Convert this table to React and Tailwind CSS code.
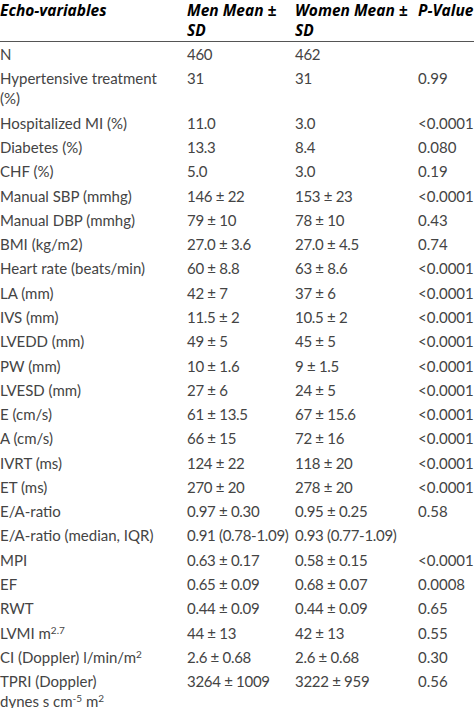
import React from "react";

const Sup = ({ children }) => <sup className="text-[10px]">{children}</sup>;

const rows = [
  ["N", "460", "462", ""],
  ["Hypertensive treatment (%)", "31", "31", "0.99"],
  ["Hospitalized MI (%)", "11.0", "3.0", "<0.0001"],
  ["Diabetes (%)", "13.3", "8.4", "0.080"],
  ["CHF (%)", "5.0", "3.0", "0.19"],
  ["Manual SBP (mmhg)", "146 ± 22", "153 ± 23", "<0.0001"],
  ["Manual DBP (mmhg)", "79 ± 10", "78 ± 10", "0.43"],
  ["BMI (kg/m2)", "27.0 ± 3.6", "27.0 ± 4.5", "0.74"],
  ["Heart rate (beats/min)", "60 ± 8.8", "63 ± 8.6", "<0.0001"],
  ["LA (mm)", "42 ± 7", "37 ± 6", "<0.0001"],
  ["IVS (mm)", "11.5 ± 2", "10.5 ± 2", "<0.0001"],
  ["LVEDD (mm)", "49 ± 5", "45 ± 5", "<0.0001"],
  ["PW (mm)", "10 ± 1.6", "9 ± 1.5", "<0.0001"],
  ["LVESD (mm)", "27 ± 6", "24 ± 5", "<0.0001"],
  ["E (cm/s)", "61 ± 13.5", "67 ± 15.6", "<0.0001"],
  ["A (cm/s)", "66 ± 15", "72 ± 16", "<0.0001"],
  ["IVRT (ms)", "124 ± 22", "118 ± 20", "<0.0001"],
  ["ET (ms)", "270 ± 20", "278 ± 20", "<0.0001"],
  ["E/A-ratio", "0.97 ± 0.30", "0.95 ± 0.25", "0.58"],
  ["E/A-ratio (median, IQR)", "0.91 (0.78-1.09)", "0.93 (0.77-1.09)", ""],
  ["MPI", "0.63 ± 0.17", "0.58 ± 0.15", "<0.0001"],
  ["EF", "0.65 ± 0.09", "0.68 ± 0.07", "0.0008"],
  ["RWT", "0.44 ± 0.09", "0.44 ± 0.09", "0.65"],
  [<>LVMI m<Sup>2.7</Sup></>, "44 ± 13", "42 ± 13", "0.55"],
  [<>CI (Doppler) l/min/m<Sup>2</Sup></>, "2.6 ± 0.68", "2.6 ± 0.68", "0.30"],
  [
    <>
      TPRI (Doppler)
      <br />
      dynes s cm<Sup>-5</Sup> m<Sup>2</Sup>
    </>,
    "3264 ± 1009",
    "3222 ± 959",
    "0.56",
  ],
];

const cols = "grid grid-cols-[187px_108px_123px_1fr]";

export default function App() {
  return (
    <div className="w-[474px] h-[708px] overflow-hidden bg-white font-['Lato','Open_Sans',sans-serif] text-[15px]">
      <div className={`${cols} border-b-[1.5px] border-[#555] pb-[1px] leading-[20px] font-['Open_Sans',sans-serif] text-[15.5px] font-bold italic text-black`}>
        <div className="pr-2">Echo-variables</div>
        <div className="pr-2">Men Mean ± SD</div>
        <div className="pr-2">Women Mean ± SD</div>
        <div className="whitespace-nowrap">P-Value</div>
      </div>
      {rows.map((r, i) => (
        <div key={i} className={`${cols} py-[2.15px] leading-[20px] font-normal text-[#444]`}>
          <div className="pr-3">{r[0]}</div>
          <div className="whitespace-nowrap tracking-[-0.3px]">{r[1]}</div>
          <div className="whitespace-nowrap tracking-[-0.3px]">{r[2]}</div>
          <div className="whitespace-nowrap">{r[3]}</div>
        </div>
      ))}
    </div>
  );
}
